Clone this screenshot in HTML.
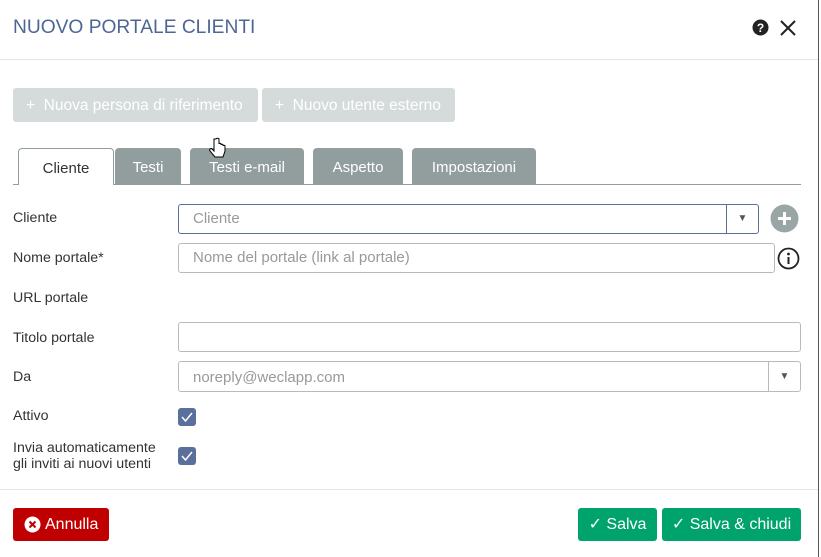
<!DOCTYPE html>
<html><head><style>
*{box-sizing:border-box;margin:0;padding:0}
body{width:821px;height:557px;background:#fff;font-family:"Liberation Sans",sans-serif;font-size:14px;color:#333;position:relative;overflow:hidden}
.a{position:absolute}
.title{left:13px;top:17px;font-size:19.2px;color:#4d6795}
.hr{left:0;width:818px;height:1px;background:#e6e6e6}
.btn{top:88px;height:34px;background:#d5dbdb;border-radius:3px;color:#fff;font-size:15.5px;line-height:35px;padding-left:13px;white-space:nowrap}
.tab{top:148px;height:36px;background:#929e9e;border-radius:4px 4px 0 0;color:#fff;font-size:15px;line-height:39px;text-align:center}
.lbl{left:13px;font-size:14.2px;color:#333}
.inp{left:178px;border:1px solid #b5bcbc;border-radius:3px;background:#fff;font-size:15px;color:#999;padding-left:14px}
.cb{left:178px;width:18px;height:18px;background:#5a6f9c;border-radius:3px}
.gbtn{top:508px;height:33px;background:#00a36c;border-radius:3px;color:#fff;font-size:16px;line-height:33px;text-align:center;white-space:nowrap}
</style></head><body>
<div class="a title">NUOVO PORTALE CLIENTI</div>
<svg class="a" style="left:752px;top:19px" width="17" height="17" viewBox="0 0 17 17"><circle cx="8.5" cy="8.5" r="8" fill="#222"/><text x="8.5" y="13" font-size="12" font-weight="bold" fill="#fff" text-anchor="middle" font-family="Liberation Sans">?</text></svg>
<svg class="a" style="left:779px;top:19px" width="18" height="18"><path d="M2 2L16 16M16 2L2 16" stroke="#222" stroke-width="2"/></svg>
<div class="a" style="left:818px;top:0;width:3px;height:557px;background:#fff;border-left:1px solid #555"></div>
<div class="a hr" style="top:59px"></div>
<div class="a btn" style="left:13px;width:245px">+&nbsp; Nuova persona di riferimento</div>
<div class="a btn" style="left:262px;width:193px">+&nbsp; Nuovo utente esterno</div>
<div class="a" style="left:13px;top:184px;width:788px;height:1px;background:#929e9e"></div>
<div class="a tab" style="left:18px;width:96px;height:37px;background:#fff;border:1px solid #929e9e;border-bottom:none;color:#333">Cliente</div>
<div class="a tab" style="left:115px;width:66px">Testi</div>
<div class="a tab" style="left:190px;width:114px">Testi e-mail</div>
<div class="a tab" style="left:313px;width:90px">Aspetto</div>
<div class="a tab" style="left:412px;width:124px">Impostazioni</div>
<svg class="a" style="left:207px;top:137px" width="22" height="24"><path d="M7 2v12l-2-2c-1-1-3 0-2 2l5 6h8l2-6v-5c0-1-2-1-2 0v-1c0-1-2-1-2 0v-1c0-1-2-1-2 0V2c0-1-3-1-3 0z" fill="#fff" stroke="#000"/></svg>

<div class="a lbl" style="top:210px">Cliente</div>
<div class="a inp" style="top:204px;width:581px;height:30px;border-color:#5a6f9c;line-height:28px">Cliente<div class="a" style="right:0;top:0;width:32px;height:28px;border-left:1px solid #5a6f9c;color:#555;font-size:10px;text-align:center">▼</div></div>
<svg class="a" style="left:770px;top:204px" width="29" height="29"><circle cx="14.5" cy="14.5" r="14" fill="#9aa5a5"/><path d="M14.5 8v13M8 14.5h13" stroke="#fff" stroke-width="3"/></svg>

<div class="a lbl" style="top:250px">Nome portale*</div>
<div class="a inp" style="top:243px;width:597px;height:30px;line-height:28px">Nome del portale (link al portale)</div>
<svg class="a" style="left:777px;top:247px" width="23" height="23"><circle cx="11.5" cy="11.5" r="10" fill="none" stroke="#222" stroke-width="1.8"/><circle cx="11.5" cy="7" r="1.4" fill="#222"/><path d="M11.5 10v7" stroke="#222" stroke-width="2"/></svg>

<div class="a lbl" style="top:290px">URL portale</div>
<div class="a lbl" style="top:330px">Titolo portale</div>
<div class="a inp" style="top:322px;width:623px;height:30px"></div>
<div class="a lbl" style="top:369px">Da</div>
<div class="a inp" style="top:361px;width:623px;height:31px;line-height:31px">noreply@weclapp.com<div class="a" style="right:0;top:0;width:32px;height:29px;line-height:29px;border-left:1px solid #b5bcbc;color:#555;font-size:10px;text-align:center">▼</div></div>
<div class="a lbl" style="top:408px">Attivo</div>
<div class="a cb" style="top:408px"><svg width="18" height="18"><path d="M4 9l3.5 4L14 5" stroke="#fff" stroke-width="1.5" fill="none"/></svg></div>
<div class="a lbl" style="top:440px;line-height:16px">Invia automaticamente<br>gli inviti ai nuovi utenti</div>
<div class="a cb" style="top:447px"><svg width="18" height="18"><path d="M4 9l3.5 4L14 5" stroke="#fff" stroke-width="1.5" fill="none"/></svg></div>

<div class="a hr" style="top:489px"></div>
<div class="a" style="left:13px;top:508px;width:96px;height:33px;background:#c00000;border-radius:3px;color:#fff;font-size:16px;line-height:33px;padding-left:32px">Annulla
<svg class="a" style="left:11px;top:8px" width="17" height="17"><circle cx="8.5" cy="8.5" r="8" fill="#fff"/><path d="M5.5 5.5l6 6M11.5 5.5l-6 6" stroke="#c00000" stroke-width="2"/></svg></div>
<div class="a gbtn" style="left:578px;width:79px">✓ Salva</div>
<div class="a gbtn" style="left:662px;width:139px">✓ Salva &amp; chiudi</div>
</body></html>
